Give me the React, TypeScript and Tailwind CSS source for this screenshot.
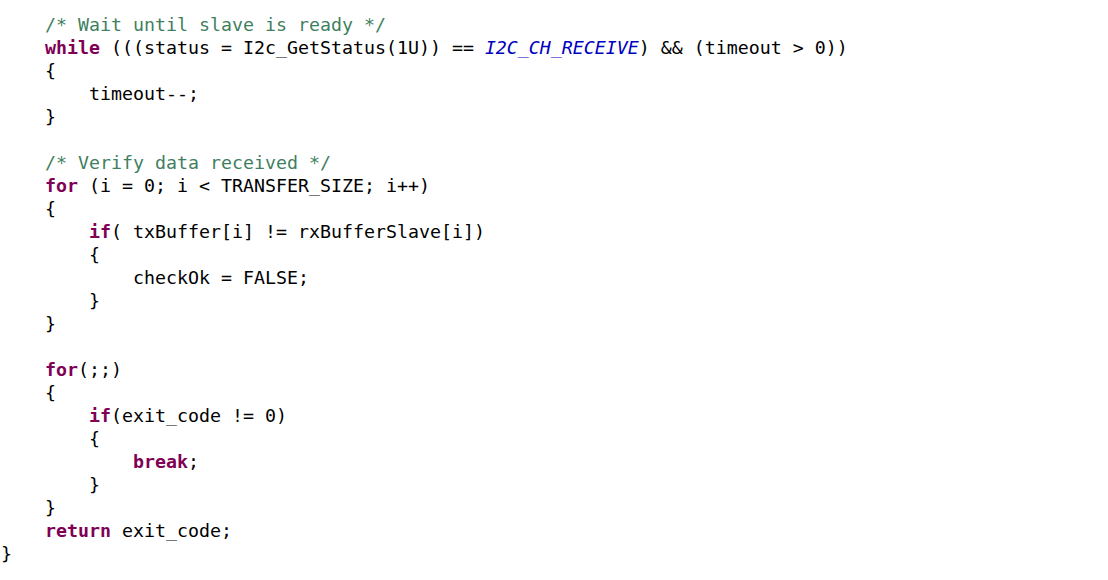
type Tok = [string, "kw" | "cm" | "cn" | "tx"];

const lines: Tok[][] = [
  [["    ", "tx"], ["/* Wait until slave is ready */", "cm"]],
  [["    ", "tx"], ["while", "kw"], [" (((status = I2c_GetStatus(1U)) == ", "tx"], ["I2C_CH_RECEIVE", "cn"], [") && (timeout > 0))", "tx"]],
  [["    {", "tx"]],
  [["        timeout--;", "tx"]],
  [["    }", "tx"]],
  [["", "tx"]],
  [["    ", "tx"], ["/* Verify data received */", "cm"]],
  [["    ", "tx"], ["for", "kw"], [" (i = 0; i < TRANSFER_SIZE; i++)", "tx"]],
  [["    {", "tx"]],
  [["        ", "tx"], ["if", "kw"], ["( txBuffer[i] != rxBufferSlave[i])", "tx"]],
  [["        {", "tx"]],
  [["            checkOk = FALSE;", "tx"]],
  [["        }", "tx"]],
  [["    }", "tx"]],
  [["", "tx"]],
  [["    ", "tx"], ["for", "kw"], ["(;;)", "tx"]],
  [["    {", "tx"]],
  [["        ", "tx"], ["if", "kw"], ["(exit_code != 0)", "tx"]],
  [["        {", "tx"]],
  [["            ", "tx"], ["break", "kw"], [";", "tx"]],
  [["        }", "tx"]],
  [["    }", "tx"]],
  [["    ", "tx"], ["return", "kw"], [" exit_code;", "tx"]],
  [["}", "tx"]],
];

const cls = {
  kw: "font-bold text-[#7f0055]",
  cm: "text-[#3f7f5f]",
  cn: "italic text-[#0000c0]",
  tx: "text-black",
};

export default function App() {
  return (
    <div className="w-[1108px] h-[580px] bg-white overflow-hidden pt-[13px] pl-[1px]">
      <pre className="font-['DejaVu_Sans_Mono',monospace] text-[18.27px] leading-[23px] whitespace-pre">
        {lines.map((ln, i) => (
          <div key={i} className="h-[23px]">
            {ln.map(([t, k], j) => (
              <span key={j} className={cls[k]}>
                {t}
              </span>
            ))}
          </div>
        ))}
      </pre>
    </div>
  );
}
